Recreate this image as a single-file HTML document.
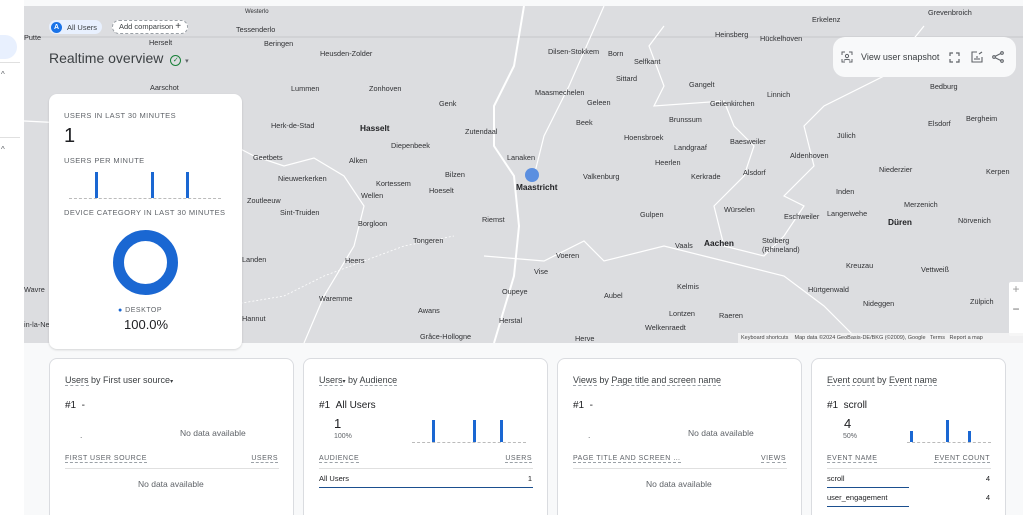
<!DOCTYPE html>
<html><head><meta charset="utf-8"><style>
*{box-sizing:border-box;margin:0;padding:0}
html{overflow:hidden;height:515px}
body{width:1023px;height:515px;overflow:hidden;background:#f8f9fa;font-family:"Liberation Sans",sans-serif;position:relative;color:#202124}
.map{position:absolute;left:24px;top:6px;width:999px;height:337px;background:#dcdde0;overflow:hidden}
.side{position:absolute;left:0;top:0;width:24px;height:515px;background:#fff}
.l{position:absolute;font-size:7.3px;color:#303134;white-space:nowrap}
.b{font-weight:bold;font-size:8.3px;color:#202124}
.card{position:absolute;background:#fff;border:1px solid #dadce0;border-radius:8px}
.cap{font-size:7.5px;letter-spacing:.4px;color:#5f6368}
.t{font-size:9px;color:#3c4043}
.u{border-bottom:1px dashed #9aa0a6}
.hd{position:absolute;font-size:7px;letter-spacing:.5px;color:#5f6368}
.bar{position:absolute;width:3px;background:#1a67d2}
.nd{position:absolute;font-size:8.5px;color:#5f6368}
</style></head><body>
<div class="side">
<div style="position:absolute;left:0;top:35px;width:17px;height:24px;background:#e8f0fe;border-radius:0 12px 12px 0"></div>
<div style="position:absolute;left:0;top:62px;width:20px;border-top:1px solid #e0e0e0"></div>
<div style="position:absolute;left:1px;top:70px;font-size:8px;color:#5f6368">^</div>
<div style="position:absolute;left:0;top:137px;width:20px;border-top:1px solid #e0e0e0"></div>
<div style="position:absolute;left:1px;top:145px;font-size:8px;color:#5f6368">^</div>
</div>
<div class="map">
<svg width="999" height="337" style="position:absolute;left:0;top:0" fill="none" stroke="#fff" stroke-width="1.2">
<path d="M0 31 L999 31" stroke="#b0b0b4" stroke-width=".6"/>
<path d="M0 115 L60 118 L180 124 L230 150 L260 160 L290 152 L320 170 L340 200 L330 240 L300 290 L280 337"/>
<path d="M500 0 L490 60 L470 100 L470 140 L490 170 L495 220 L490 270 L470 337" stroke-width="2"/>
<path d="M580 0 L545 80 L520 130 L510 170"/>
<path d="M640 20 L625 40 L640 80 L630 100 L700 95 L710 120 L730 140 L720 170 L690 200 L700 240 L740 250 L760 230 L780 200 L760 190 L790 160 L780 120 L800 100 L860 70 L900 20"/>
<path d="M460 250 L520 255 L560 235 L580 255 L640 240 L680 250 L720 260 L760 270 L800 300 L830 330"/>
<path d="M40 270 L80 280 L150 275 L200 300 L260 290 L300 270 L380 240 L430 230" stroke-dasharray="2 2" stroke-width=".8"/>
</svg>
<div class="l" style="left:221px;top:3px;font-size:6px">Westerlo</div>
<div class="l" style="left:90px;top:20px">Laakdal</div>
<div class="l" style="left:212px;top:19px">Tessenderlo</div>
<div class="l" style="left:0;top:27px">Putte</div>
<div class="l" style="left:125px;top:32px">Herselt</div>
<div class="l" style="left:126px;top:77px">Aarschot</div>
<div class="l" style="left:240px;top:33px">Beringen</div>
<div class="l" style="left:296px;top:43px">Heusden-Zolder</div>
<div class="l" style="left:267px;top:78px">Lummen</div>
<div class="l" style="left:345px;top:78px">Zonhoven</div>
<div class="l" style="left:247px;top:115px">Herk-de-Stad</div>
<div class="l b" style="left:336px;top:117px">Hasselt</div>
<div class="l" style="left:415px;top:93px">Genk</div>
<div class="l" style="left:441px;top:121px">Zutendaal</div>
<div class="l" style="left:367px;top:135px">Diepenbeek</div>
<div class="l" style="left:229px;top:147px">Geetbets</div>
<div class="l" style="left:325px;top:150px">Alken</div>
<div class="l" style="left:254px;top:168px">Nieuwerkerken</div>
<div class="l" style="left:352px;top:173px">Kortessem</div>
<div class="l" style="left:421px;top:164px">Bilzen</div>
<div class="l" style="left:405px;top:180px">Hoeselt</div>
<div class="l" style="left:337px;top:185px">Wellen</div>
<div class="l" style="left:223px;top:190px">Zoutleeuw</div>
<div class="l" style="left:256px;top:202px">Sint-Truiden</div>
<div class="l" style="left:334px;top:213px">Borgloon</div>
<div class="l" style="left:458px;top:209px">Riemst</div>
<div class="l" style="left:389px;top:230px">Tongeren</div>
<div class="l" style="left:218px;top:249px">Landen</div>
<div class="l" style="left:321px;top:250px">Heers</div>
<div class="l" style="left:0;top:279px">Wavre</div>
<div class="l" style="left:295px;top:288px">Waremme</div>
<div class="l" style="left:394px;top:300px">Awans</div>
<div class="l" style="left:218px;top:308px">Hannut</div>
<div class="l" style="left:0;top:314px">in-la-Ne</div>
<div class="l" style="left:396px;top:326px">Grâce-Hollogne</div>
<div class="l" style="left:475px;top:310px">Herstal</div>
<div class="l" style="left:478px;top:281px">Oupeye</div>
<div class="l" style="left:510px;top:261px">Vise</div>
<div class="l" style="left:532px;top:245px">Voeren</div>
<div class="l" style="left:580px;top:285px">Aubel</div>
<div class="l" style="left:551px;top:328px">Herve</div>
<div class="l" style="left:621px;top:317px">Welkenraedt</div>
<div class="l" style="left:645px;top:303px">Lontzen</div>
<div class="l" style="left:695px;top:305px">Raeren</div>
<div class="l" style="left:653px;top:276px">Kelmis</div>
<div class="l" style="left:651px;top:235px">Vaals</div>
<div class="l b" style="left:680px;top:232px">Aachen</div>
<div class="l" style="left:616px;top:204px">Gulpen</div>
<div class="l" style="left:738px;top:230px">Stolberg<br>(Rhineland)</div>
<div class="l" style="left:700px;top:199px">Würselen</div>
<div class="l" style="left:760px;top:206px">Eschweiler</div>
<div class="l" style="left:803px;top:203px">Langerwehe</div>
<div class="l b" style="left:864px;top:211px">Düren</div>
<div class="l" style="left:934px;top:210px">Nörvenich</div>
<div class="l" style="left:880px;top:194px">Merzenich</div>
<div class="l" style="left:812px;top:181px">Inden</div>
<div class="l" style="left:855px;top:159px">Niederzier</div>
<div class="l" style="left:962px;top:161px">Kerpen</div>
<div class="l" style="left:766px;top:145px">Aldenhoven</div>
<div class="l" style="left:813px;top:125px">Jülich</div>
<div class="l" style="left:904px;top:113px">Elsdorf</div>
<div class="l" style="left:942px;top:108px">Bergheim</div>
<div class="l" style="left:906px;top:76px">Bedburg</div>
<div class="l" style="left:743px;top:84px">Linnich</div>
<div class="l" style="left:706px;top:131px">Baesweiler</div>
<div class="l" style="left:719px;top:162px">Alsdorf</div>
<div class="l" style="left:667px;top:166px">Kerkrade</div>
<div class="l" style="left:631px;top:152px">Heerlen</div>
<div class="l" style="left:650px;top:137px">Landgraaf</div>
<div class="l" style="left:600px;top:127px">Hoensbroek</div>
<div class="l" style="left:645px;top:109px">Brunssum</div>
<div class="l" style="left:686px;top:93px">Geilenkirchen</div>
<div class="l" style="left:665px;top:74px">Gangelt</div>
<div class="l" style="left:592px;top:68px">Sittard</div>
<div class="l" style="left:610px;top:51px">Selfkant</div>
<div class="l" style="left:691px;top:24px">Heinsberg</div>
<div class="l" style="left:736px;top:28px">Hückelhoven</div>
<div class="l" style="left:788px;top:9px">Erkelenz</div>
<div class="l" style="left:904px;top:2px">Grevenbroich</div>
<div class="l" style="left:524px;top:41px">Dilsen-Stokkem</div>
<div class="l" style="left:584px;top:43px">Born</div>
<div class="l" style="left:511px;top:82px">Maasmechelen</div>
<div class="l" style="left:563px;top:92px">Geleen</div>
<div class="l" style="left:552px;top:112px">Beek</div>
<div class="l" style="left:483px;top:147px">Lanaken</div>
<div class="l b" style="left:492px;top:176px">Maastricht</div>
<div class="l" style="left:559px;top:166px">Valkenburg</div>
<div class="l" style="left:822px;top:255px">Kreuzau</div>
<div class="l" style="left:897px;top:259px">Vettweiß</div>
<div class="l" style="left:784px;top:279px">Hürtgenwald</div>
<div class="l" style="left:839px;top:293px">Nideggen</div>
<div class="l" style="left:946px;top:291px">Zülpich</div>
<div style="position:absolute;left:501px;top:162px;width:14px;height:14px;border-radius:50%;background:#5b8fe0"></div>
<div style="position:absolute;left:985px;top:276px;width:14px;height:54px;background:#fff;border-radius:2px 0 0 2px"><div style="font-size:12px;color:#999;text-align:center">+</div><div style="font-size:12px;color:#666;text-align:center;margin-top:6px">−</div></div>
<div style="position:absolute;left:714px;top:327px;width:285px;height:10px;background:rgba(245,245,245,.85);font-size:5.5px;color:#444;padding:2px 3px;white-space:nowrap">Keyboard shortcuts &nbsp;&nbsp; Map data ©2024 GeoBasis-DE/BKG (©2009), Google &nbsp; Terms &nbsp; Report a map</div>
</div>
<div style="position:absolute;left:49px;top:20px;height:14px;padding:0 5px 0 2px;background:#e8f0fe;border-radius:7px;font-size:7.5px;color:#3c4043;display:flex;align-items:center"><span style="width:11px;height:11px;border-radius:50%;background:#1a73e8;color:#fff;font-size:7px;font-weight:bold;display:inline-flex;align-items:center;justify-content:center;margin-right:5px">A</span>All Users</div>
<div style="position:absolute;left:112px;top:20px;height:14px;padding:0 6px;background:#fff;border:1px dashed #9aa0a6;border-radius:7px;font-size:7.5px;color:#3c4043;line-height:12px">Add comparison <span style="font-size:10px">+</span></div>
<div style="position:absolute;left:49px;top:50px;font-size:14px;color:#3c4043">Realtime overview <span style="display:inline-block;width:11px;height:11px;border:1.3px solid #188038;border-radius:50%;font-size:7px;color:#188038;text-align:center;line-height:9px;vertical-align:1px;margin-left:3px">✓</span> <span style="font-size:7px;color:#5f6368">▾</span></div>
<div style="position:absolute;left:833px;top:37px;width:183px;height:40px;background:#f8f9fa;border-radius:12px;font-size:9px;color:#3c4043;display:flex;align-items:center;padding-left:8px">
<svg width="12" height="12" viewBox="0 0 12 12" fill="none" stroke="#5f6368" stroke-width="1"><path d="M1 4V1h3M8 1h3v3M11 8v3H8M4 11H1V8"/><circle cx="6" cy="5" r="1.6"/><path d="M3 9.5c.5-1.5 5.5-1.5 6 0"/></svg>
<span style="margin-left:8px">View user snapshot</span>
<svg style="margin-left:10px" width="11" height="11" viewBox="0 0 11 11" fill="none" stroke="#5f6368" stroke-width="1.2"><path d="M1 4V1h3M7 1h3v3M10 7v3H7M4 10H1V7"/></svg>
<svg style="margin-left:11px" width="12" height="12" viewBox="0 0 12 12" fill="none" stroke="#5f6368" stroke-width="1.1"><path d="M6 1H1v10h10V6"/><path d="M4 9V7M6 9V5M8 9V7M8 3l3-2"/></svg>
<svg style="margin-left:9px" width="12" height="12" viewBox="0 0 12 12" fill="none" stroke="#5f6368" stroke-width="1.1"><circle cx="10" cy="2" r="1.3"/><circle cx="2" cy="6" r="1.3"/><circle cx="10" cy="10" r="1.3"/><path d="M3 5.4l6-3M3 6.6l6 3"/></svg>
</div>
<div class="card" style="left:49px;top:94px;width:193px;height:255px;border:none;box-shadow:0 1px 2px rgba(0,0,0,.15)">
<div class="cap" style="position:absolute;left:15px;top:17px">USERS IN LAST 30 MINUTES</div>
<div style="position:absolute;left:15px;top:31px;font-size:20px">1</div>
<div class="cap" style="position:absolute;left:15px;top:62px">USERS PER MINUTE</div>
<div style="position:absolute;left:20px;top:104px;width:152px;border-top:1px dashed #bbb"></div>
<div class="bar" style="left:46px;top:78px;height:26px"></div>
<div class="bar" style="left:102px;top:78px;height:26px"></div>
<div class="bar" style="left:137px;top:78px;height:26px"></div>
<div class="cap" style="position:absolute;left:15px;top:114px">DEVICE CATEGORY IN LAST 30 MINUTES</div>
<div style="position:absolute;left:64px;top:136px;width:65px;height:65px;border-radius:50%;border:11px solid #1a67d2"></div>
<div style="position:absolute;left:69px;top:213px;font-size:7px;letter-spacing:.5px;color:#5f6368"><span style="color:#1a67d2">●</span> DESKTOP</div>
<div style="position:absolute;left:75px;top:223px;font-size:13px;color:#202124">100.0%</div>
</div>
<div class="card" style="left:49px;top:358px;width:245px;height:165px">
<div class="t" style="position:absolute;left:15px;top:16px"><span class="u">Users</span> by <span>First user source</span><span style="font-size:6px">▾</span></div>
<div style="position:absolute;left:15px;top:41px;font-size:10px">#1 &nbsp;-</div>
<div class="nd" style="left:130px;top:69px">No data available</div>
<div class="nd" style="left:30px;top:71px">.</div>
<div class="hd" style="left:15px;top:96px"><span class="u">FIRST USER SOURCE</span></div>
<div class="hd" style="right:15px;top:96px"><span class="u">USERS</span></div>
<div style="position:absolute;left:15px;top:109px;width:214px;border-top:1px solid #e0e0e0"></div>
<div class="nd" style="left:88px;top:120px">No data available</div>
</div>
<div class="card" style="left:303px;top:358px;width:245px;height:165px">
<div class="t" style="position:absolute;left:15px;top:16px"><span class="u">Users</span><span style="font-size:6px">▾</span> by <span class="u">Audience</span></div>
<div style="position:absolute;left:15px;top:41px;font-size:10px">#1 &nbsp;All Users</div>
<div style="position:absolute;left:30px;top:57px;font-size:13px">1</div>
<div style="position:absolute;left:30px;top:74px;font-size:7px;color:#5f6368">100%</div>
<div style="position:absolute;left:108px;top:83px;width:114px;border-top:1px dashed #bbb"></div>
<div class="bar" style="left:128px;top:61px;height:22px"></div>
<div class="bar" style="left:169px;top:61px;height:22px"></div>
<div class="bar" style="left:196px;top:61px;height:22px"></div>
<div class="hd" style="left:15px;top:96px"><span class="u">AUDIENCE</span></div>
<div class="hd" style="right:15px;top:96px"><span class="u">USERS</span></div>
<div style="position:absolute;left:15px;top:109px;width:214px;border-top:1px solid #e0e0e0"></div>
<div style="position:absolute;left:15px;top:115px;font-size:7.5px">All Users</div>
<div style="position:absolute;right:15px;top:115px;font-size:7.5px">1</div>
<div style="position:absolute;left:15px;top:128px;width:214px;border-top:1.5px solid #1b4f8f"></div>
</div>
<div class="card" style="left:557px;top:358px;width:245px;height:165px">
<div class="t" style="position:absolute;left:15px;top:16px"><span class="u">Views</span> by <span class="u">Page title and screen name</span></div>
<div style="position:absolute;left:15px;top:41px;font-size:10px">#1 &nbsp;-</div>
<div class="nd" style="left:130px;top:69px">No data available</div>
<div class="nd" style="left:30px;top:71px">.</div>
<div class="hd" style="left:15px;top:96px"><span class="u">PAGE TITLE AND SCREEN …</span></div>
<div class="hd" style="right:15px;top:96px"><span class="u">VIEWS</span></div>
<div style="position:absolute;left:15px;top:109px;width:214px;border-top:1px solid #e0e0e0"></div>
<div class="nd" style="left:88px;top:120px">No data available</div>
</div>
<div class="card" style="left:811px;top:358px;width:195px;height:165px">
<div class="t" style="position:absolute;left:15px;top:16px"><span class="u">Event count</span> by <span class="u">Event name</span></div>
<div style="position:absolute;left:15px;top:41px;font-size:10px">#1 &nbsp;scroll</div>
<div style="position:absolute;left:32px;top:57px;font-size:13px">4</div>
<div style="position:absolute;left:31px;top:74px;font-size:7px;color:#5f6368">50%</div>
<div style="position:absolute;left:95px;top:83px;width:84px;border-top:1px dashed #bbb"></div>
<div class="bar" style="left:98px;top:72px;height:11px"></div>
<div class="bar" style="left:134px;top:61px;height:22px"></div>
<div class="bar" style="left:156px;top:72px;height:11px"></div>
<div class="hd" style="left:15px;top:96px"><span class="u">EVENT NAME</span></div>
<div class="hd" style="right:15px;top:96px"><span class="u">EVENT COUNT</span></div>
<div style="position:absolute;left:15px;top:109px;width:164px;border-top:1px solid #e0e0e0"></div>
<div style="position:absolute;left:15px;top:115px;font-size:7.5px">scroll</div>
<div style="position:absolute;right:15px;top:115px;font-size:7.5px">4</div>
<div style="position:absolute;left:15px;top:128px;width:82px;border-top:1.5px solid #1b4f8f"></div>
<div style="position:absolute;left:15px;top:134px;font-size:7.5px">user_engagement</div>
<div style="position:absolute;right:15px;top:134px;font-size:7.5px">4</div>
<div style="position:absolute;left:15px;top:147px;width:82px;border-top:1.5px solid #1b4f8f"></div>
</div>
</body></html>
